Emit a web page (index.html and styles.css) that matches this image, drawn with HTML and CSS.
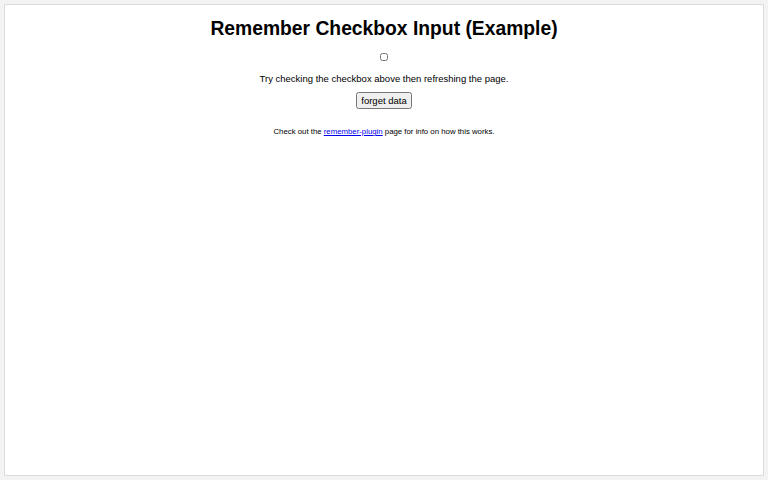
FILE: index.html
```html
<!DOCTYPE html>
<html lang="en">
<head>
    <meta charset="UTF-8">
    <meta name="viewport" content="width=device-width, initial-scale=1.0">
    <title>Remember Checkbox Input (Example)</title>
    <link rel="stylesheet" href="styles.css">
</head>
<body>
    <div class="page">
        <h1>Remember Checkbox Input (Example)</h1>
        <div class="field">
            <input type="checkbox" id="remember">
        </div>
        <p class="hint">Try checking the checkbox above then refreshing the page.</p>
        <button class="forget" id="forget">forget data</button>
        <p class="note">Check out the <a href="#">remember-plugin</a> page for info on how this works.</p>
    </div>

    <script>
        const box = document.getElementById('remember');
        box.checked = localStorage.getItem('remember') === '1';

        box.addEventListener('change', () => {
            localStorage.setItem('remember', box.checked ? '1' : '0');
        });

        document.getElementById('forget').addEventListener('click', () => {
            localStorage.removeItem('remember');
            box.checked = false;
        });
    </script>
</body>
</html>
```

FILE: styles.css
```css
html, body {
    height: 100%;
}

body {
    font-family: "Liberation Sans", Arial, sans-serif;
    margin: 0;
    padding: 4px;
    box-sizing: border-box;
    background-color: #f3f3f3;
}

.page {
    height: 100%;
    box-sizing: border-box;
    background-color: white;
    border: 1px solid #dcdcdc;
    text-align: center;
    padding-top: 13px;
}

h1 {
    font-size: 19.3px;
    line-height: 22px;
    margin: 0 0 13px;
}

.field {
    height: 9px;
    line-height: 9px;
}

.field input {
    width: 8px;
    height: 8px;
    margin: 0;
    vertical-align: top;
}

.hint {
    font-size: 9.5px;
    line-height: 11px;
    margin: 11px 0 6px;
}

.forget {
    font-family: "Liberation Sans", Arial, sans-serif;
    font-size: 9.5px;
    line-height: 11px;
    padding: 1px 3px;
}

.note {
    font-size: 7.8px;
    line-height: 9px;
    margin: 18px 0 0;
}

.note a {
    color: #0000ee;
}
```
